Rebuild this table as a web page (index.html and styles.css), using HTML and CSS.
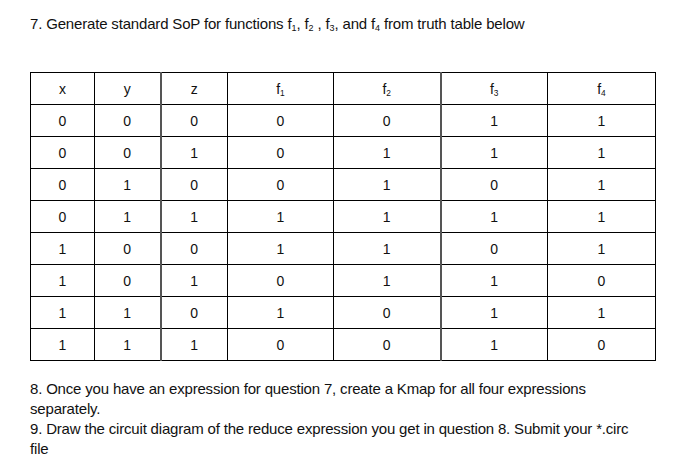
FILE: index.html
```html
<!DOCTYPE html>
<html>
<head>
<meta charset="utf-8">
<link rel="stylesheet" href="styles.css">
</head>
<body>
<div class="page">
  <p class="title">7. Generate standard SoP for functions f<sub>1</sub>, f<sub>2</sub> , f<sub>3</sub>, and f<sub>4</sub> from truth table below</p>
  <table class="tt">
    <colgroup>
      <col class="c1"><col class="c2"><col class="c3"><col class="c4"><col class="c5"><col class="c6"><col class="c7">
    </colgroup>
    <tr><td>x</td><td>y</td><td class="thick">z</td><td>f<sub>1</sub></td><td>f<sub>2</sub></td><td class="thick">f<sub>3</sub></td><td>f<sub>4</sub></td></tr>
    <tr><td>0</td><td>0</td><td class="thick">0</td><td>0</td><td>0</td><td class="thick">1</td><td>1</td></tr>
    <tr><td>0</td><td>0</td><td class="thick">1</td><td>0</td><td>1</td><td class="thick">1</td><td>1</td></tr>
    <tr><td>0</td><td>1</td><td class="thick">0</td><td>0</td><td>1</td><td class="thick">0</td><td>1</td></tr>
    <tr><td>0</td><td>1</td><td class="thick">1</td><td>1</td><td>1</td><td class="thick">1</td><td>1</td></tr>
    <tr><td>1</td><td>0</td><td class="thick">0</td><td>1</td><td>1</td><td class="thick">0</td><td>1</td></tr>
    <tr><td>1</td><td>0</td><td class="thick">1</td><td>0</td><td>1</td><td class="thick">1</td><td>0</td></tr>
    <tr><td>1</td><td>1</td><td class="thick">0</td><td>1</td><td>0</td><td class="thick">1</td><td>1</td></tr>
    <tr><td>1</td><td>1</td><td class="thick">1</td><td>0</td><td>0</td><td class="thick">1</td><td>0</td></tr>
  </table>
  <p class="para">8. Once you have an expression for question 7, create a Kmap for all four expressions separately.<br>9. Draw the circuit diagram of the reduce expression you get in question 8. Submit your *.circ file</p>
</div>
</body>
</html>
```
FILE: styles.css
```css
html, body {
  margin: 0;
  padding: 0;
  background: #fff;
}
.page {
  padding: 15px 30px 0 30px;
  font-family: "Liberation Sans", Arial, sans-serif;
  color: #111;
}
.title {
  margin: 0;
  font-size: 15px;
  line-height: 18px;
  letter-spacing: -0.17px;
}
sub {
  font-size: 60%;
  vertical-align: -2px;
  line-height: 0;
  letter-spacing: 0;
}
.tt {
  margin-top: 39px;
  border-collapse: collapse;
  table-layout: fixed;
  width: 625px;
}
.c1 { width: 64px; }
.c2 { width: 66px; }
.c3 { width: 67px; }
.c4 { width: 106px; }
.c5 { width: 107px; }
.c6 { width: 107px; }
.c7 { width: 108px; }
.tt td {
  border: 1px solid #000;
  height: 31px;
  padding: 0;
  text-align: center;
  vertical-align: middle;
  font-size: 14px;
  line-height: 16px;
  color: #111;
}
.tt td.thick {
  border-left: 2px solid #555;
}
.para {
  margin: 18px 0 0 0;
  font-size: 15px;
  line-height: 20px;
  letter-spacing: -0.18px;
  width: 610px;
}
```
